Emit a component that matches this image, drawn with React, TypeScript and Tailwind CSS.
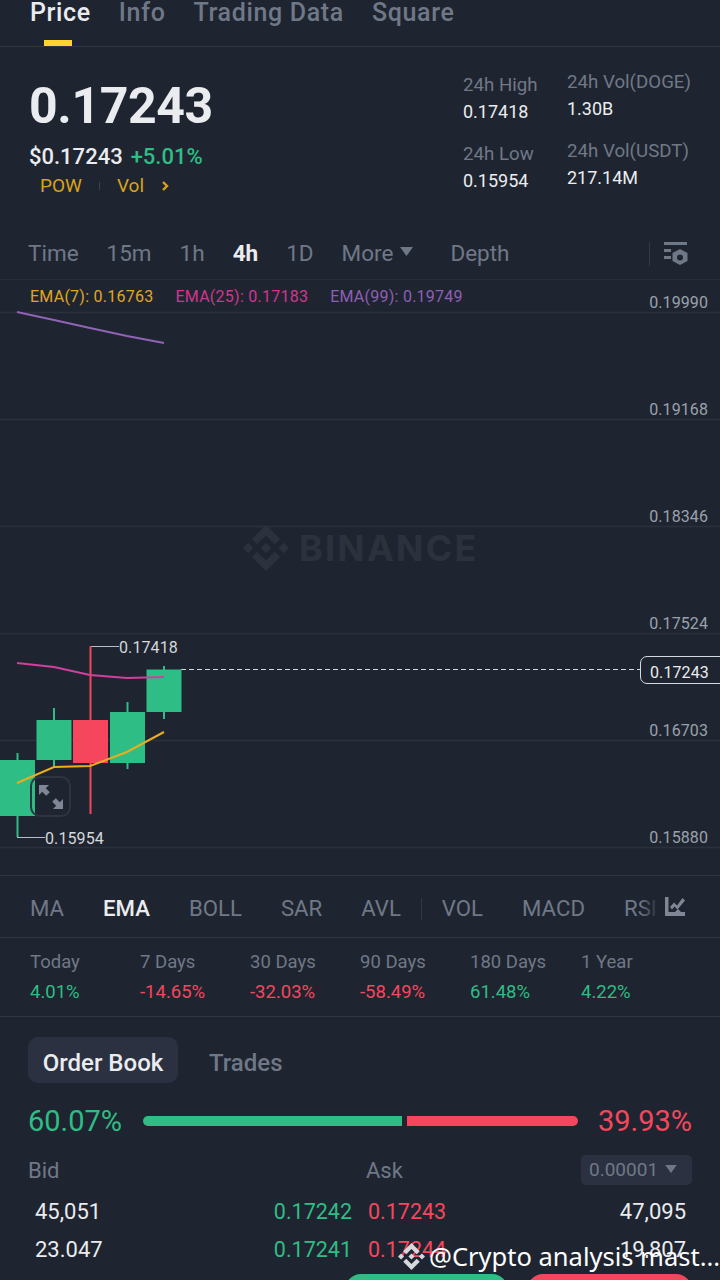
import { SiBinance } from 'react-icons/si';

const font = { fontFamily: 'Roboto, sans-serif' };

const indicators = ['MA', 'EMA', 'BOLL', 'SAR', 'AVL'];
const periods = [
  { label: 'Today', value: '4.01%', up: true },
  { label: '7 Days', value: '-14.65%', up: false },
  { label: '30 Days', value: '-32.03%', up: false },
  { label: '90 Days', value: '-58.49%', up: false },
  { label: '180 Days', value: '61.48%', up: true },
  { label: '1 Year', value: '4.22%', up: true },
];
const axis = [
  { price: '0.19990', top: 'top-[13px]' },
  { price: '0.19168', top: 'top-[120px]' },
  { price: '0.18346', top: 'top-[227px]' },
  { price: '0.17524', top: 'top-[334px]' },
  { price: '0.16703', top: 'top-[441px]' },
  { price: '0.15880', top: 'top-[548px]' },
];
const gridLines = [312, 419, 526, 633, 740, 847];
const candles = [
  { x: 0, y: 760, h: 56, wick: [753, 837], c: '#2ebd85' },
  { x: 36.5, y: 720, h: 40, wick: [708, 767], c: '#2ebd85' },
  { x: 73, y: 720, h: 43, wick: [646, 814], c: '#f6465d' },
  { x: 110, y: 712, h: 51, wick: [702, 769], c: '#2ebd85' },
  { x: 146.5, y: 669.5, h: 42.5, wick: [666, 719], c: '#2ebd85' },
];

function Stat({ label, value, className }: { label: string; value: string; className?: string }) {
  return (
    <div className={className}>
      <div className="text-[18.7px] leading-[26px] text-[#6f7887]">{label}</div>
      <div className="mt-[1px] text-[18px] leading-[26px] text-[#eaecef]">{value}</div>
    </div>
  );
}

function Chart() {
  return (
    <div className="relative h-[595px] overflow-hidden">
      <svg className="absolute inset-0" width="720" height="595" viewBox="0 280 720 595">
        {gridLines.map((y) => (
          <line key={y} x1="0" x2="720" y1={y + 0.5} y2={y + 0.5} stroke="#2a313d" strokeWidth="1.5" />
        ))}
        <g>
          <line x1="91" x2="119" y1="646.5" y2="646.5" stroke="#b7bdc6" />
          <line x1="17" x2="45" y1="837.5" y2="837.5" stroke="#b7bdc6" />
          <line x1="181" x2="640" y1="669.5" y2="669.5" stroke="#d5d8dc" strokeDasharray="5 3" />
        </g>
        {candles.map((k) => (
          <g key={k.x}>
            <line x1={k.x + 17.5} x2={k.x + 17.5} y1={k.wick[0]} y2={k.wick[1]} stroke={k.c} strokeWidth="2" />
            <rect x={k.x} y={k.y} width="35" height={k.h} fill={k.c} />
          </g>
        ))}
        <polyline points="17,312 54,320 90,328 127,336 164,343" fill="none" stroke="#9163b6" strokeWidth="2" />
        <polyline points="17,663 54,667 90,675 127,678 164,677" fill="none" stroke="#d23f9c" strokeWidth="2" />
        <polyline points="17,783 54,767 90,766 127,752 164,732" fill="none" stroke="#e8ae1e" strokeWidth="2" />
      </svg>

      {/* legend */}
      <div className="absolute left-[30px] top-[7px] flex gap-[22px] text-[16px] leading-5 tracking-[0.25px]">
        <span className="text-[#e0a526]">EMA(7): 0.16763</span>
        <span className="text-[#d0368f]">EMA(25): 0.17183</span>
        <span className="text-[#8e5fb5]">EMA(99): 0.19749</span>
      </div>

      {/* watermark */}
      <div className="absolute left-[243px] top-[245px] flex items-center gap-[10px] text-[#2b323e]">
        <SiBinance size={46} />
        <span className="text-[36px] font-bold leading-[46px] tracking-[2.2px]" style={{ fontFamily: 'Inter, sans-serif' }}>
          BINANCE
        </span>
      </div>

      {axis.map((a) => (
        <span key={a.price} className={`absolute right-[12px] text-[16px] leading-5 tracking-[0.1px] text-[#9aa1ac] ${a.top}`}>
          {a.price}
        </span>
      ))}

      <span className="absolute left-[119px] top-[358px] text-[16px] leading-5 tracking-[0.1px] text-[#d5d8dc]">0.17418</span>
      <span className="absolute left-[45px] top-[549px] text-[16px] leading-5 tracking-[0.1px] text-[#d5d8dc]">0.15954</span>

      <div className="absolute left-[640px] top-[376px] flex h-[28px] w-[90px] items-center rounded-l-[7px] border border-[#d5d8dc] bg-[#1f2530] pl-[9px] pt-[5px] text-[16px] tracking-[0.1px] text-[#eaecef]">
        0.17243
      </div>

      <div className="absolute left-[30px] top-[496px] flex h-[41px] w-[41px] items-center justify-center rounded-[10px] border-2 border-[#2e3542]">
        <svg width="26" height="26" viewBox="0 0 26 26" fill="#7f8796">
          <path d="M1 1h10l-3.2 3.2 4 4-3.6 3.6-4-4L1 11z" />
          <path d="M25 25H15l3.2-3.2-4-4 3.6-3.6 4 4L25 15z" />
        </svg>
      </div>
    </div>
  );
}

export default function App() {
  return (
    <div className="h-[1280px] w-[720px] overflow-hidden bg-[#1f2530] text-[#eaecef]" style={font}>
      {/* Top tabs */}
      <div className="flex h-[47px] gap-[28px] border-b border-[#2f3744] pl-[30px] text-[25px] font-medium leading-[26px] tracking-[0.65px] text-[#6f7887]">
        <div className="relative">
          <span className="text-[#eaecef]">Price</span>
          <div className="absolute bottom-0 left-[14px] h-[6px] w-[28px] bg-[#fcd535]" />
        </div>
        <span>Info</span>
        <span>Trading Data</span>
        <span>Square</span>
      </div>

      {/* Price summary */}
      <div className="flex h-[186px] justify-between pl-[29px] pr-[29px]">
        <div className="pt-[30px]">
          <div className="text-[50px] font-bold leading-[58px] tracking-[-0.4px] text-[#eaecef]">0.17243</div>
          <div className="mt-[8px] flex gap-[8px] text-[22px] font-medium leading-7">
            <span>$0.17243</span>
            <span className="text-[#2ebd85]">+5.01%</span>
          </div>
          <div className="ml-[11px] mt-[3px] flex items-center text-[19px] leading-6 text-[#d9a21b]">
            <span>POW</span>
            <span className="mx-[17px] h-[8px] w-px bg-[#3b4351]" />
            <span>Vol</span>
            <svg className="ml-[17px]" width="9" height="12" viewBox="0 0 9 12" fill="none" stroke="#d9a21b" strokeWidth="2.4">
              <path d="M2 2l4 4-4 4" />
            </svg>
          </div>
        </div>
        <div className="flex pt-[22px]">
          <div className="w-[104px] pt-[3px]">
            <Stat label="24h High" value="0.17418" />
            <Stat className="mt-[16px]" label="24h Low" value="0.15954" />
          </div>
          <div className="w-[124px]">
            <Stat label="24h Vol(DOGE)" value="1.30B" />
            <Stat className="mt-[16px]" label="24h Vol(USDT)" value="217.14M" />
          </div>
        </div>
      </div>

      {/* Time frames */}
      <div className="flex h-[47px] items-center border-b border-[#272e3a] pb-[4px] pl-[28px] pr-[32px] text-[22.5px] text-[#6f7887]">
        <div className="flex flex-1 items-center gap-[28px]">
          <span>Time</span>
          <span>15m</span>
          <span>1h</span>
          <span className="font-bold text-[#eaecef]">4h</span>
          <span>1D</span>
          <span className="flex items-center gap-[7px]">
            More
            <svg width="13" height="10" viewBox="0 0 13 10" fill="#6f7887" className="mb-[5px]">
              <path d="M0 0h13L6.5 9z" />
            </svg>
          </span>
          <span className="ml-[9px]">Depth</span>
        </div>
        <span className="mr-[14px] h-[24px] w-px bg-[#333a47]" />
        <svg width="24" height="23" viewBox="0 0 24 23" fill="#6f7887" className="mb-[2px]">
          <path d="M0 0h23v3H0zM0 7h7v3H0zM0 14h7v3H0z" />
          <path fillRule="evenodd" d="M16 7l7.5 4v8L16 23l-7.5-4v-8zm0 5.500a3 3 0 100 6 3 3 0 000-6z" />
        </svg>
      </div>

      <Chart />

      {/* Indicator tabs */}
      <div className="relative flex h-[63px] items-center gap-[39px] overflow-hidden border-y border-[#2f3744] pl-[30px] pt-[4px] text-[22.2px] text-[#6f7887]">
        {indicators.map((name) => (
          <span key={name} className={name === 'EMA' ? 'font-medium text-[#eaecef]' : ''}>
            {name}
          </span>
        ))}
        <span className="-mx-[19px] h-[22px] w-px shrink-0 bg-[#2f3744]" />
        <span>VOL</span>
        <span>MACD</span>
        <span>RSI</span>
        <div className="absolute bottom-0 left-[640px] top-0 flex w-[80px] items-start bg-gradient-to-r from-transparent to-[#1f2530] to-[25%] pl-[25px] pt-[21px]">
          <svg width="20" height="19" viewBox="0 0 20 19" fill="#7f8796">
            <path d="M0 0h3.500v15H20v4H0z" />
            <path d="M5 10l4-4.500 3 3L17.500 1 20 3.500 12.500 12.500l-3-3L7 12.500z" />
            <path d="M10 15l3-3 3 3z" />
          </svg>
        </div>
      </div>

      {/* Price change by period */}
      <div className="grid h-[79px] grid-cols-[110px_110px_110px_110px_111px_1fr] border-b border-[#2f3744] pl-[30px] pt-[12px] text-[18.5px] leading-[24px]">
        {periods.map((p) => (
          <div key={p.label}>
            <div className="text-[#6f7887]">{p.label}</div>
            <div className={`mt-[6px] ${p.up ? 'text-[#2ebd85]' : 'text-[#f6465d]'}`}>{p.value}</div>
          </div>
        ))}
      </div>

      {/* Order book */}
      <div className="relative px-[28px] pt-[20px]">
        <div className="flex items-center gap-[31px] text-[24px] font-medium">
          <div className="flex h-[46px] w-[150px] items-center justify-center rounded-[10px] bg-[#2b3140] pt-[6px]">Order Book</div>
          <span className="pt-[6px] text-[#6f7887]">Trades</span>
        </div>

        <div className="mt-[20px] flex items-center text-[29px] leading-[36px]">
          <span className="w-[115px] text-[#2ebd85]">60.07%</span>
          <div className="flex h-[10px] w-[435px] gap-[5px]">
            <div className="w-[259px] rounded-l-full bg-[#2ebd85]" />
            <div className="flex-1 rounded-r-full bg-[#f6465d]" />
          </div>
          <span className="ml-auto text-[#f6465d]">39.93%</span>
        </div>

        <div className="mt-[14px] flex h-[34px] items-center text-[22px] text-[#6f7887]">
          <span className="w-[338px]">Bid</span>
          <span>Ask</span>
          <div className="ml-auto flex h-[30px] w-[111px] items-center gap-[7px] rounded-[5px] bg-[#2b3140] pl-[8px] text-[19px]">
            0.00001
            <svg width="12" height="8" viewBox="0 0 13 9" fill="#6f7887" className="mb-[2px]">
              <path d="M0 0h13L6.500 9z" />
            </svg>
          </div>
        </div>

        {/* the second row is cut off by the creator tag band in the original */}
        <div className="mt-[6px] grid h-[65px] grid-cols-[324px_1fr] overflow-hidden text-[22px] leading-[38px]">
          <div className="flex justify-between pl-[7px]">
            <span>45,051</span>
            <span className="text-[21.5px] text-[#2ebd85]">0.17242</span>
          </div>
          <div className="flex justify-between pl-[16px] pr-[6px]">
            <span className="text-[21.5px] text-[#f6465d]">0.17243</span>
            <span>47,095</span>
          </div>
          <div className="flex justify-between pl-[7px]">
            <span>23.047</span>
            <span className="text-[21.5px] text-[#2ebd85]">0.17241</span>
          </div>
          <div className="flex justify-between pl-[16px] pr-[6px]">
            <span className="text-[21.5px] text-[#f6465d]">0.17244</span>
            <span>19,807</span>
          </div>
        </div>

        {/* Buy / sell peeking in at the bottom edge */}
        <div className="absolute left-[345px] top-[257px] flex gap-[19px]">
          <div className="h-[30px] w-[163px] rounded-t-[16px] bg-[#2ebd85]" />
          <div className="h-[30px] w-[165px] rounded-t-[16px] bg-[#f6465d]" />
        </div>

        {/* Creator tag */}
        <div
          className="absolute left-[398px] top-[221px] flex items-center gap-[4px] whitespace-nowrap text-[25.5px] leading-[36px] text-white"
          style={{ fontFamily: '"Noto Sans", sans-serif' }}
        >
          <SiBinance size={27} className="text-[#d5d8dc]" />
          <span>@Crypto analysis mast...</span>
        </div>
      </div>
    </div>
  );
}
